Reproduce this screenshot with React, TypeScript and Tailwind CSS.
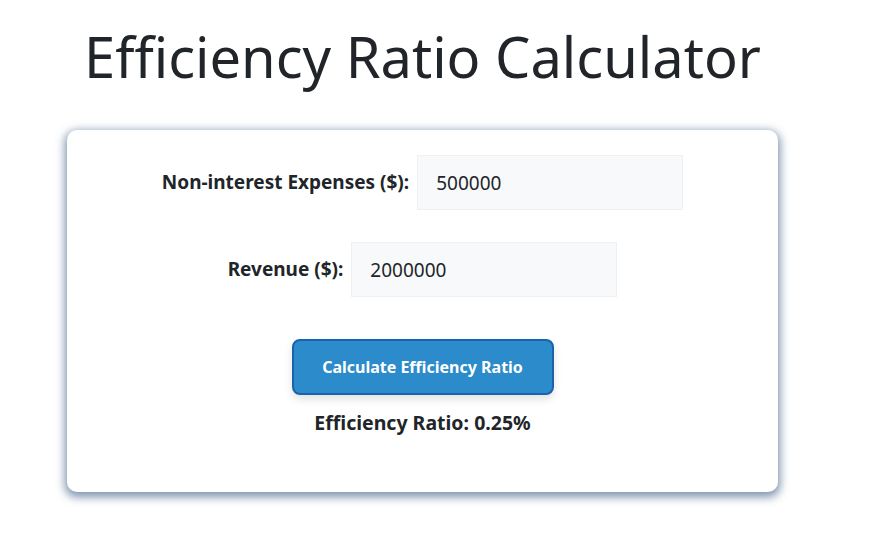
import { useState } from "react";

const Field = ({
  label,
  value,
  onChange,
}: {
  label: string;
  value: string;
  onChange: (v: string) => void;
}) => (
  <div className="flex items-center justify-center gap-2">
    <label className="text-[19px] font-bold text-[#212529]">{label}</label>
    <input
      type="text"
      value={value}
      onChange={(e) => onChange(e.target.value)}
      className="h-[55px] w-[266px] border border-[#eef0f2] bg-[#f8f9fa] px-[18px] text-[19px] text-[#212529] outline-none"
    />
  </div>
);

export default function App() {
  const [expenses, setExpenses] = useState("500000");
  const [revenue, setRevenue] = useState("2000000");
  const ratio = (Number(expenses) / Number(revenue)).toFixed(2);

  return (
    <div className="min-h-[545px] bg-white font-['Noto_Sans',sans-serif] text-[#212529]">
      <div className="ml-[67px] w-[711px] pt-[16px]">
        <h1 className="text-center text-[56px] leading-[80px] font-normal text-[#212529]">
          Efficiency Ratio Calculator
        </h1>
        <div className="mt-[34px] flex flex-col items-center rounded-[10px] bg-white pt-[25px] pb-[55px] shadow-[0_3px_10px_2px_rgba(70,100,140,0.7)]">
          <Field label="Non-interest Expenses ($):" value={expenses} onChange={setExpenses} />
          <div className="mt-[32px]">
            <Field label="Revenue ($):" value={revenue} onChange={setRevenue} />
          </div>
          <button className="mt-[42px] h-[56px] w-[262px] rounded-[8px] border-2 border-[#1a62ab] bg-[#2b8bcb] text-[16px] font-bold text-white shadow-[0_4px_8px_rgba(0,0,0,0.12)]">
            Calculate Efficiency Ratio
          </button>
          <p className="mt-[13px] text-[19.5px] font-bold text-[#212529]">
            Efficiency Ratio: {ratio}%
          </p>
        </div>
      </div>
    </div>
  );
}
